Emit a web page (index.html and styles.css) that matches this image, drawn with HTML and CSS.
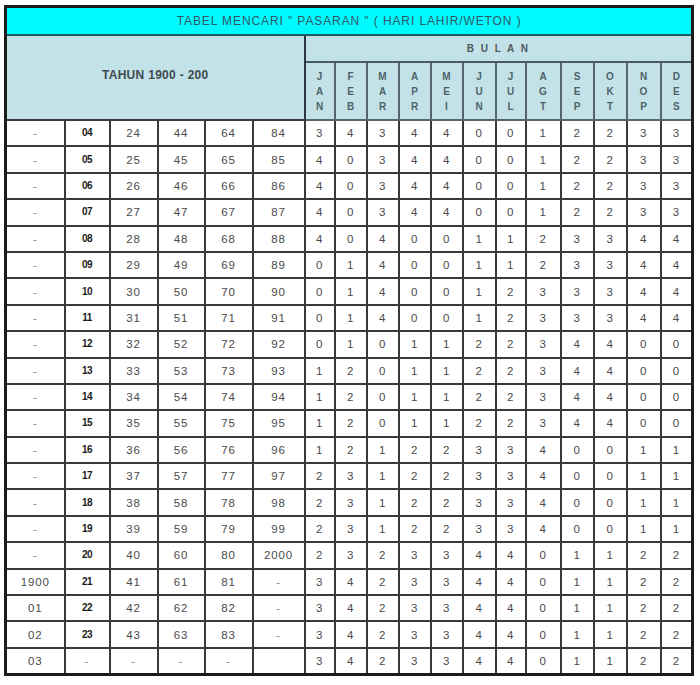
FILE: index.html
```html
<!DOCTYPE html>
<html>
<head>
<meta charset="utf-8">
<link rel="stylesheet" href="styles.css">
</head>
<body>
<table class="grid">
<colgroup>
<col class="c1"><col class="c2"><col class="c3"><col class="c4"><col class="c5"><col class="c6">
<col class="m30"><col class="m32"><col class="m32"><col class="m32"><col class="m32"><col class="m33"><col class="m30"><col class="m35"><col class="m33"><col class="m33"><col class="m34"><col class="m32">
</colgroup>
<tr class="title"><td colspan="18">TABEL MENCARI " PASARAN " ( HARI LAHIR/WETON )</td></tr>
<tr class="bulan"><td class="tahun" colspan="6" rowspan="2">TAHUN 1900 - 200</td><td class="bl" colspan="12">B U L A N</td></tr>
<tr class="months">
<td>J<br>A<br>N</td><td>F<br>E<br>B</td><td>M<br>A<br>R</td><td>A<br>P<br>R</td><td>M<br>E<br>I</td><td>J<br>U<br>N</td><td>J<br>U<br>L</td><td>A<br>G<br>T</td><td>S<br>E<br>P</td><td>O<br>K<br>T</td><td>N<br>O<br>P</td><td>D<br>E<br>S</td>
</tr>
<tr><td class="dash">-</td><td class="b">04</td><td>24</td><td>44</td><td>64</td><td>84</td><td>3</td><td>4</td><td>3</td><td>4</td><td>4</td><td>0</td><td>0</td><td>1</td><td>2</td><td>2</td><td>3</td><td>3</td></tr>
<tr><td class="dash">-</td><td class="b">05</td><td>25</td><td>45</td><td>65</td><td>85</td><td>4</td><td>0</td><td>3</td><td>4</td><td>4</td><td>0</td><td>0</td><td>1</td><td>2</td><td>2</td><td>3</td><td>3</td></tr>
<tr><td class="dash">-</td><td class="b">06</td><td>26</td><td>46</td><td>66</td><td>86</td><td>4</td><td>0</td><td>3</td><td>4</td><td>4</td><td>0</td><td>0</td><td>1</td><td>2</td><td>2</td><td>3</td><td>3</td></tr>
<tr><td class="dash">-</td><td class="b">07</td><td>27</td><td>47</td><td>67</td><td>87</td><td>4</td><td>0</td><td>3</td><td>4</td><td>4</td><td>0</td><td>0</td><td>1</td><td>2</td><td>2</td><td>3</td><td>3</td></tr>
<tr><td class="dash">-</td><td class="b">08</td><td>28</td><td>48</td><td>68</td><td>88</td><td>4</td><td>0</td><td>4</td><td>0</td><td>0</td><td>1</td><td>1</td><td>2</td><td>3</td><td>3</td><td>4</td><td>4</td></tr>
<tr><td class="dash">-</td><td class="b">09</td><td>29</td><td>49</td><td>69</td><td>89</td><td>0</td><td>1</td><td>4</td><td>0</td><td>0</td><td>1</td><td>1</td><td>2</td><td>3</td><td>3</td><td>4</td><td>4</td></tr>
<tr><td class="dash">-</td><td class="b">10</td><td>30</td><td>50</td><td>70</td><td>90</td><td>0</td><td>1</td><td>4</td><td>0</td><td>0</td><td>1</td><td>2</td><td>3</td><td>3</td><td>3</td><td>4</td><td>4</td></tr>
<tr><td class="dash">-</td><td class="b">11</td><td>31</td><td>51</td><td>71</td><td>91</td><td>0</td><td>1</td><td>4</td><td>0</td><td>0</td><td>1</td><td>2</td><td>3</td><td>3</td><td>3</td><td>4</td><td>4</td></tr>
<tr><td class="dash">-</td><td class="b">12</td><td>32</td><td>52</td><td>72</td><td>92</td><td>0</td><td>1</td><td>0</td><td>1</td><td>1</td><td>2</td><td>2</td><td>3</td><td>4</td><td>4</td><td>0</td><td>0</td></tr>
<tr><td class="dash">-</td><td class="b">13</td><td>33</td><td>53</td><td>73</td><td>93</td><td>1</td><td>2</td><td>0</td><td>1</td><td>1</td><td>2</td><td>2</td><td>3</td><td>4</td><td>4</td><td>0</td><td>0</td></tr>
<tr><td class="dash">-</td><td class="b">14</td><td>34</td><td>54</td><td>74</td><td>94</td><td>1</td><td>2</td><td>0</td><td>1</td><td>1</td><td>2</td><td>2</td><td>3</td><td>4</td><td>4</td><td>0</td><td>0</td></tr>
<tr><td class="dash">-</td><td class="b">15</td><td>35</td><td>55</td><td>75</td><td>95</td><td>1</td><td>2</td><td>0</td><td>1</td><td>1</td><td>2</td><td>2</td><td>3</td><td>4</td><td>4</td><td>0</td><td>0</td></tr>
<tr><td class="dash">-</td><td class="b">16</td><td>36</td><td>56</td><td>76</td><td>96</td><td>1</td><td>2</td><td>1</td><td>2</td><td>2</td><td>3</td><td>3</td><td>4</td><td>0</td><td>0</td><td>1</td><td>1</td></tr>
<tr><td class="dash">-</td><td class="b">17</td><td>37</td><td>57</td><td>77</td><td>97</td><td>2</td><td>3</td><td>1</td><td>2</td><td>2</td><td>3</td><td>3</td><td>4</td><td>0</td><td>0</td><td>1</td><td>1</td></tr>
<tr><td class="dash">-</td><td class="b">18</td><td>38</td><td>58</td><td>78</td><td>98</td><td>2</td><td>3</td><td>1</td><td>2</td><td>2</td><td>3</td><td>3</td><td>4</td><td>0</td><td>0</td><td>1</td><td>1</td></tr>
<tr><td class="dash">-</td><td class="b">19</td><td>39</td><td>59</td><td>79</td><td>99</td><td>2</td><td>3</td><td>1</td><td>2</td><td>2</td><td>3</td><td>3</td><td>4</td><td>0</td><td>0</td><td>1</td><td>1</td></tr>
<tr><td class="dash">-</td><td class="b">20</td><td>40</td><td>60</td><td>80</td><td>2000</td><td>2</td><td>3</td><td>2</td><td>3</td><td>3</td><td>4</td><td>4</td><td>0</td><td>1</td><td>1</td><td>2</td><td>2</td></tr>
<tr><td>1900</td><td class="b">21</td><td>41</td><td>61</td><td>81</td><td class="dash">-</td><td>3</td><td>4</td><td>2</td><td>3</td><td>3</td><td>4</td><td>4</td><td>0</td><td>1</td><td>1</td><td>2</td><td>2</td></tr>
<tr><td>01</td><td class="b">22</td><td>42</td><td>62</td><td>82</td><td class="dash">-</td><td>3</td><td>4</td><td>2</td><td>3</td><td>3</td><td>4</td><td>4</td><td>0</td><td>1</td><td>1</td><td>2</td><td>2</td></tr>
<tr><td>02</td><td class="b">23</td><td>43</td><td>63</td><td>83</td><td class="dash">-</td><td>3</td><td>4</td><td>2</td><td>3</td><td>3</td><td>4</td><td>4</td><td>0</td><td>1</td><td>1</td><td>2</td><td>2</td></tr>
<tr><td>03</td><td class="dash">-</td><td class="dash">-</td><td class="dash">-</td><td class="dash">-</td><td></td><td>3</td><td>4</td><td>2</td><td>3</td><td>3</td><td>4</td><td>4</td><td>0</td><td>1</td><td>1</td><td>2</td><td>2</td></tr>
</table>
</body>
</html>
```
FILE: styles.css
```css
html, body {
  margin: 0;
  padding: 0;
  background: #ffffff;
}
body {
  padding: 5px 0 0 4px;
  font-family: "Liberation Sans", Arial, sans-serif;
}
.grid {
  border-collapse: collapse;
  table-layout: fixed;
  width: 689px;
  border: 3px solid #1c1c1c;
}
.c1 { width: 59px; }
.c2 { width: 45px; }
.c3 { width: 48px; }
.c4 { width: 47px; }
.c5 { width: 48px; }
.c6 { width: 52px; }
.m30 { width: 30px; }
.m32 { width: 32px; }
.m33 { width: 33px; }
.m34 { width: 34px; }
.m35 { width: 35px; }
.grid td {
  border: 2px solid #3a3a3a;
  text-align: center;
  vertical-align: middle;
  padding: 0;
  font-size: 11.5px;
  letter-spacing: 0.8px;
  color: #4a4a4a;
  height: 24.4px;
  line-height: 12px;
}
.grid td.b {
  font-weight: bold;
  font-size: 10px;
  color: #1a1a1a;
  letter-spacing: -0.5px;
}
.grid td.dash {
  color: #8a8a8a;
}
.title td {
  background: #00fbff;
  height: 26px;
  font-size: 12px;
  color: #2f5864;
  letter-spacing: 0.9px;
  border-bottom: 2px solid #1f5a64;
}
.bulan td {
  background: #c3e2e8;
  height: 25px;
  color: #3b4c52;
  font-size: 10px;
}
.grid td.tahun {
  font-weight: bold;
  color: #3e4a4e;
  font-size: 12px;
  letter-spacing: 0.3px;
  border-right: 2px solid #2c3a3e;
  padding-bottom: 6px;
}
.grid td.bl {
  font-weight: bold;
  font-size: 10px;
  letter-spacing: 2px;
  color: #4a5a60;
  border-bottom: 2px solid #465a60;
}
.months td {
  background: #c3e2e8;
  height: 56px;
  font-size: 10px;
  letter-spacing: 0;
  line-height: 15px;
  font-weight: bold;
  color: #4e6268;
  border-color: #56666b;
}
```
